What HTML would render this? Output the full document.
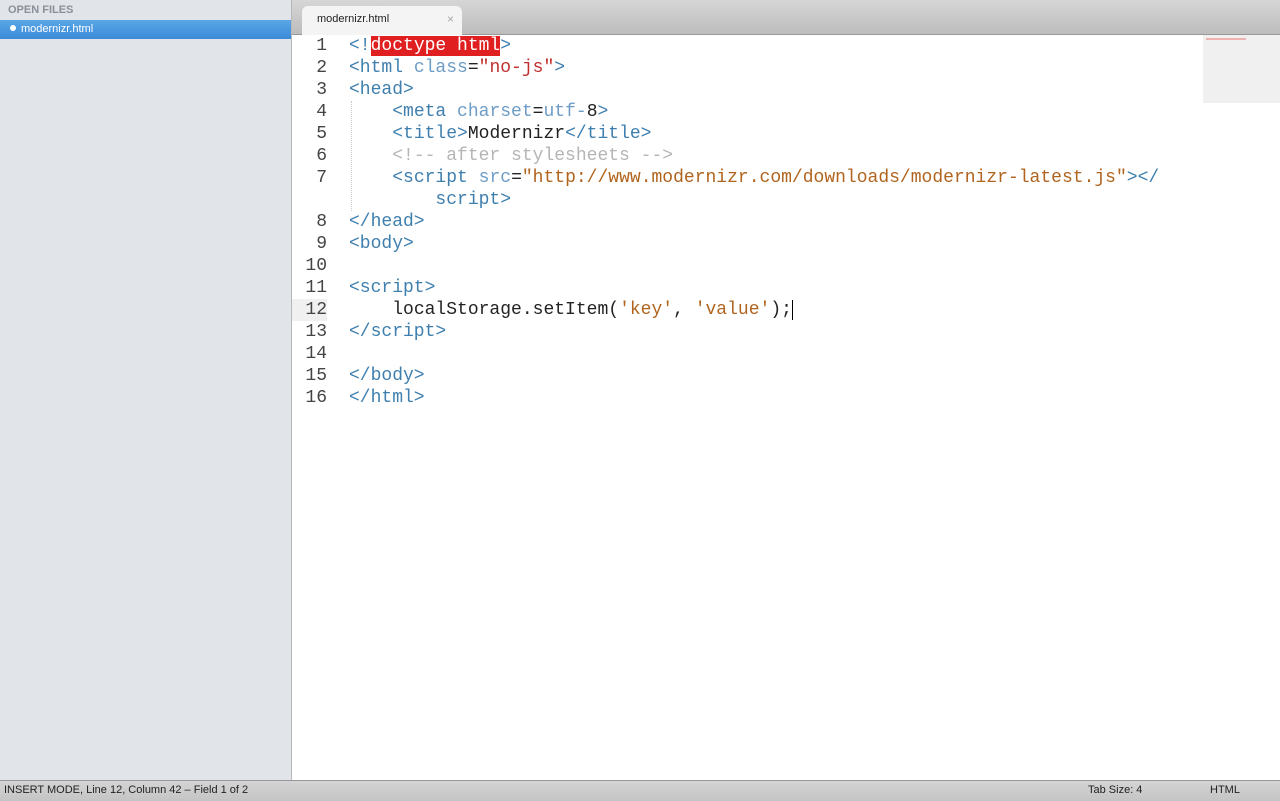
<!DOCTYPE html>
<html><head><style>
body{margin:0;width:1280px;height:800px;overflow:hidden;background:#fff;font-family:"Liberation Sans",sans-serif;position:relative}
#side{position:absolute;left:0;top:0;width:291px;height:780px;background:#e1e4e8;border-right:1px solid #b8b8b8}
#side .h{position:absolute;left:8px;top:4px;font-size:11px;font-weight:bold;color:#8a9099}
#side .sel{position:absolute;left:0;top:20px;width:291px;height:19px;background:linear-gradient(#5aa6e6,#3a8ad8);color:#fff;font-size:11px;line-height:18px}
#side .sel span{display:inline-block;width:6px;height:6px;border-radius:3px;background:#fff;margin:0 5px 0 10px;vertical-align:1px}
#tabs{position:absolute;left:292px;top:0;width:988px;height:34px;background:linear-gradient(#d6d6d6,#bdbdbd);border-bottom:1px solid #999}
#tab{position:absolute;left:10px;top:6px;width:160px;height:29px;background:#f4f4f4;border-radius:6px 6px 0 0;font-size:11px;color:#222}
#tab b{font-weight:normal;position:absolute;left:15px;top:7px}
#tab i{font-style:normal;position:absolute;left:145px;top:6px;color:#aaa;font-size:12px}
#code{position:absolute;left:292px;top:35px;font-family:"Liberation Mono",monospace;font-size:18px;line-height:22px}
.l{height:22px;position:relative;white-space:pre}
.n{display:inline-block;width:35px;text-align:right;color:#444;margin-right:22px}
.t{color:#3f7fae}.a{color:#6d9cc6}.s{color:#c03030}.u{color:#b0641e}.c{color:#b5b5b5}.k{color:#222}
.hl{background:#f0f0f0}
#mini{position:absolute;left:1203px;top:35px;width:77px;height:68px;background:#f0f0f0}
#status{position:absolute;left:0;top:780px;width:1280px;height:20px;background:linear-gradient(#d4d4d4,#c4c4c4);border-top:1px solid #999;font-size:11px;line-height:19px;color:#222}
</style></head><body>
<div id="side"><div class="h">OPEN FILES</div><div class="sel"><span></span>modernizr.html</div></div>
<div id="tabs"><div id="tab"><b>modernizr.html</b><i>×</i></div></div>
<div id="mini"></div>
<div style="position:absolute;left:1206px;top:38px;width:40px;height:30px;border-top:2px solid #e88;opacity:.6"></div>
<div id="code">
<div class="l"><span class="n">1</span><span class="t">&lt;!</span><span style="background:#e02020;color:#fff">doctype html</span><span class="t">&gt;</span></div>
<div class="l"><span class="n">2</span><span class="t">&lt;html</span> <span class="a">class</span><span class="k">=</span><span class="s">"no-js"</span><span class="t">&gt;</span></div>
<div class="l"><span class="n">3</span><span class="t">&lt;head&gt;</span></div>
<div class="l"><span class="n">4</span>    <span class="t">&lt;meta</span> <span class="a">charset</span><span class="k">=</span><span class="a">utf-</span><span class="k">8</span><span class="t">&gt;</span></div>
<div class="l"><span class="n">5</span>    <span class="t">&lt;title&gt;</span><span class="k">Modernizr</span><span class="t">&lt;/title&gt;</span></div>
<div class="l"><span class="n">6</span>    <span class="c">&lt;!-- after stylesheets --&gt;</span></div>
<div class="l"><span class="n">7</span>    <span class="t">&lt;script</span> <span class="a">src</span><span class="k">=</span><span class="u">"http://www.modernizr.com/downloads/modernizr-latest.js"</span><span class="t">&gt;&lt;/</span></div>
<div class="l"><span class="n"></span>        <span class="t">script&gt;</span></div>
<div class="l"><span class="n">8</span><span class="t">&lt;/head&gt;</span></div>
<div class="l"><span class="n">9</span><span class="t">&lt;body&gt;</span></div>
<div class="l"><span class="n">10</span></div>
<div class="l"><span class="n">11</span><span class="t">&lt;script&gt;</span></div>
<div class="l"><span class="n hl">12</span>    <span class="k">localStorage.setItem(</span><span class="u">'key'</span><span class="k">, </span><span class="u">'value'</span><span class="k">);</span><span style="border-left:1.5px solid #000"></span></div>
<div class="l"><span class="n">13</span><span class="t">&lt;/script&gt;</span></div>
<div class="l"><span class="n">14</span></div>
<div class="l"><span class="n">15</span><span class="t">&lt;/body&gt;</span></div>
<div class="l"><span class="n">16</span><span class="t">&lt;/html&gt;</span></div>
</div>
<div style="position:absolute;left:351px;top:101px;height:110px;border-left:1px dotted #ccc"></div>
<div id="status"><span style="position:absolute;left:4px">INSERT MODE, Line 12, Column 42 – Field 1 of 2</span><span style="position:absolute;left:1088px">Tab Size: 4</span><span style="position:absolute;left:1210px">HTML</span></div>
</body></html>
